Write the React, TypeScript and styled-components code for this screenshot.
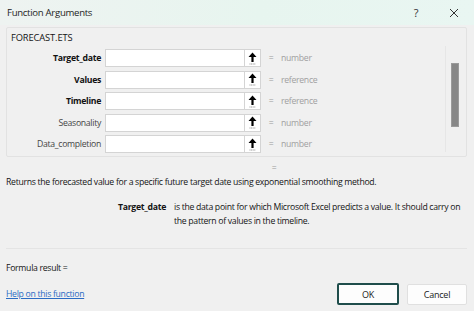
import styled, { createGlobalStyle } from 'styled-components';

const GlobalStyle = createGlobalStyle`
  html, body {
    margin: 0;
    padding: 0;
    background: #f0f0f0;
  }
  * {
    box-sizing: border-box;
  }
`;

const Window = styled.div`
  width: 474px;
  height: 311px;
  display: flex;
  flex-direction: column;
  background: #f0f0f0;
  font-family: 'Open Sans', 'Noto Sans', sans-serif;
  font-size: 8.7px;
  letter-spacing: -0.3px;
  color: #141414;
  overflow: hidden;
`;

const TitleBar = styled.div`
  height: 25px;
  flex: none;
  display: flex;
  align-items: center;
  padding-left: 7px;
  background: linear-gradient(90deg, #eef3f1 0%, #e7f5ef 55%, #e9f6f2 100%);
`;

const Title = styled.div`
  flex: 1;
  font-size: 9.6px;
  color: #1e1e1e;
`;

const TitleButton = styled.div<{ $w: number }>`
  width: ${(p) => p.$w}px;
  display: flex;
  justify-content: center;
  font-size: 11px;
  color: #333;
`;

const Body = styled.div`
  flex: 1;
  display: flex;
  flex-direction: column;
  padding: 2px 7px 0 6px;
`;

const GroupBox = styled.div`
  height: 130px;
  border: 1px solid #e2e2e2;
  border-radius: 2px;
  display: flex;
  flex-direction: column;
`;

const FunctionName = styled.div`
  height: 18px;
  font-size: 9.3px;
  letter-spacing: -0.1px;
  padding: 3px 0 0 4px;
`;

const GroupContent = styled.div`
  flex: 1;
  display: flex;
`;

const Rows = styled.div`
  flex: 1;
  display: flex;
  flex-direction: column;
  gap: 3.6px;
  padding-top: 3px;
`;

const Row = styled.div`
  display: grid;
  grid-template-columns: 94px 156px 12px 1fr;
  column-gap: 4px;
  align-items: center;
  height: 18px;
`;

const ArgLabel = styled.div<{ $required?: boolean }>`
  text-align: right;
  font-weight: ${(p) => (p.$required ? 700 : 400)};
  color: ${(p) => (p.$required ? '#111' : '#444')};
`;

const InputWrap = styled.div`
  display: flex;
  height: 18px;
  border: 1px solid #d4d4d4;
  background: #fff;
`;

const TextInput = styled.div`
  flex: 1;
`;

const RefButton = styled.div`
  width: 16px;
  border-left: 1px solid #d4d4d4;
  display: flex;
  align-items: center;
  justify-content: center;
`;

const Eq = styled.div`
  color: #9a9a9a;
  text-align: center;
`;

const ArgType = styled.div`
  color: #a0a0a0;
`;

const ScrollTrack = styled.div`
  width: 19px;
  border-left: 1px solid #e6e6e6;
  margin: 0 2px 4px 0;
  display: flex;
  justify-content: center;
  padding-top: 17px;
`;

const ScrollThumb = styled.div`
  width: 8px;
  height: 64px;
  background: #878787;
  border: 1px solid #9a9a9a;
`;

const ResultLine = styled.div`
  height: 18px;
  padding-top: 4px;
  display: grid;
  grid-template-columns: 262px 12px;
  align-items: center;
`;

const Description = styled.div`
  line-height: 14px;
  height: 18px;
  white-space: nowrap;
`;

const ArgHelp = styled.div`
  display: grid;
  grid-template-columns: 160px 1fr;
  column-gap: 8px;
  padding-top: 7px;
  line-height: 14px;
  height: 55px;
`;

const ArgHelpName = styled.div`
  text-align: right;
  font-weight: 700;
`;

const Divider = styled.div`
  height: 1px;
  background: #e4e4e4;
`;

const FormulaResult = styled.div`
  padding-top: 13px;
  height: 34px;
`;

const Footer = styled.div`
  display: flex;
  align-items: center;
  gap: 8px;
`;

const HelpLink = styled.a`
  flex: 1;
  color: #2b6cc4;
  text-decoration: underline;
  cursor: pointer;
`;

const Button = styled.button<{ $default?: boolean }>`
  width: ${(p) => (p.$default ? 62 : 60)}px;
  height: ${(p) => (p.$default ? 22 : 21)}px;
  font-family: inherit;
  font-size: 9px;
  letter-spacing: -0.2px;
  color: #1a1a1a;
  background: #fdfdfd;
  border: ${(p) => (p.$default ? '2px solid #1f4d4b' : '1px solid #e0e0e0')};
  border-radius: 2px;
  padding: 0;
`;

const RefIcon = () => (
  <svg width="9" height="13" viewBox="0 0 9 13">
    <path d="M4.5 0.5 L8.5 5 L5.6 5 L5.6 10 L3.4 10 L3.4 5 L0.5 5 Z" fill="#000" />
    <path d="M1.5 12 H7.5" stroke="#777" strokeWidth="0.8" strokeDasharray="1 0.6" />
  </svg>
);

const CloseIcon = () => (
  <svg width="10" height="10" viewBox="0 0 10 10">
    <path d="M1 1 L9 9 M9 1 L1 9" stroke="#333" strokeWidth="1" />
  </svg>
);

const args = [
  { name: 'Target_date', type: 'number', required: true },
  { name: 'Values', type: 'reference', required: true },
  { name: 'Timeline', type: 'reference', required: true },
  { name: 'Seasonality', type: 'number', required: false },
  { name: 'Data_completion', type: 'number', required: false },
];

export default function App() {
  return (
    <>
      <GlobalStyle />
      <Window>
        <TitleBar>
          <Title>Function Arguments</Title>
          <TitleButton $w={36}>?</TitleButton>
          <TitleButton $w={40}>
            <CloseIcon />
          </TitleButton>
        </TitleBar>
        <Body>
          <GroupBox>
            <FunctionName>FORECAST.ETS</FunctionName>
            <GroupContent>
              <Rows>
                {args.map((a) => (
                  <Row key={a.name}>
                    <ArgLabel $required={a.required}>{a.name}</ArgLabel>
                    <InputWrap>
                      <TextInput />
                      <RefButton>
                        <RefIcon />
                      </RefButton>
                    </InputWrap>
                    <Eq>=</Eq>
                    <ArgType>{a.type}</ArgType>
                  </Row>
                ))}
              </Rows>
              <ScrollTrack>
                <ScrollThumb />
              </ScrollTrack>
            </GroupContent>
          </GroupBox>
          <ResultLine>
            <span />
            <Eq>=</Eq>
          </ResultLine>
          <Description>
            Returns the forecasted value for a specific future target date using exponential smoothing method.
          </Description>
          <ArgHelp>
            <ArgHelpName>Target_date</ArgHelpName>
            <div>
              is the data point for which Microsoft Excel predicts a value. It should carry on the pattern of values in
              the timeline.
            </div>
          </ArgHelp>
          <Divider />
          <FormulaResult>Formula result =</FormulaResult>
          <Footer>
            <HelpLink>Help on this function</HelpLink>
            <Button $default>OK</Button>
            <Button>Cancel</Button>
          </Footer>
        </Body>
      </Window>
    </>
  );
}
